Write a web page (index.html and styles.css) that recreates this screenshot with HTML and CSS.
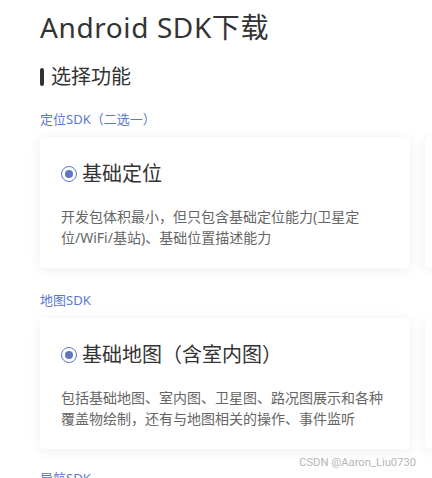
FILE: index.html
```html
<!DOCTYPE html>
<html lang="zh-CN">
<head>
<meta charset="utf-8">
<link rel="stylesheet" href="styles.css">
</head>
<body>
<div class="page">
  <h1 class="title">Android SDK下载</h1>
  <h2 class="section"><span class="bar"></span>选择功能</h2>

  <div class="group-label">定位SDK（二选一）</div>
  <div class="row">
    <div class="card">
      <div class="card-title"><span class="radio checked"></span>基础定位</div>
      <p class="card-desc">开发包体积最小，但只包含基础定位能力(卫星定位/WiFi/基站)、基础位置描述能力</p>
    </div>
    <div class="card card-peek"></div>
  </div>

  <div class="group-label">地图SDK</div>
  <div class="row">
    <div class="card">
      <div class="card-title"><span class="radio checked"></span>基础地图（含室内图）</div>
      <p class="card-desc">包括基础地图、室内图、卫星图、路况图展示和各种覆盖物绘制，还有与地图相关的操作、事件监听</p>
    </div>
    <div class="card card-peek"></div>
  </div>

  <div class="group-label group-label-last">导航SDK</div>
</div>
<div class="watermark">CSDN @Aaron_Liu0730</div>
</body>
</html>
```
FILE: styles.css
```css
html, body {
  margin: 0;
  padding: 0;
  background: #fff;
  overflow: hidden;
}
body {
  font-family: "Noto Sans", "Noto Sans CJK SC", sans-serif;
  color: #333;
  width: 432px;
  height: 478px;
  position: relative;
}
.page {
  padding: 7px 0 0 40px;
}
.title {
  margin: 0;
  font-size: 28px;
  font-weight: 400;
  line-height: 40px;
  letter-spacing: 0.6px;
  color: #333;
}
.section {
  margin: 16px 0 0;
  display: flex;
  align-items: center;
  font-size: 20px;
  font-weight: 400;
  line-height: 28px;
  color: #333;
}
.bar {
  width: 4px;
  height: 18px;
  border-radius: 2px;
  background: #333;
  margin-right: 7px;
}
.group-label {
  margin-top: 18px;
  font-size: 13px;
  line-height: 20px;
  color: #5a78cc;
}
.row + .group-label {
  margin-top: 22px;
}
.row + .group-label-last {
  margin-top: 19px;
}
.row {
  display: flex;
  gap: 15px;
  margin-top: 8px;
}
.card {
  flex: 0 0 370px;
  box-sizing: border-box;
  background: #fff;
  border-radius: 5px;
  box-shadow: 0 2px 14px rgba(0, 0, 0, 0.07);
  padding: 23px 21px 20px;
}
.card-peek {
  flex: 0 0 370px;
}
.card-title {
  display: flex;
  align-items: center;
  font-size: 20px;
  line-height: 28px;
  color: #333;
}
.radio {
  width: 16px;
  height: 16px;
  box-sizing: border-box;
  border: 1px solid #c4c4c4;
  border-radius: 50%;
  margin-right: 5px;
  position: relative;
  flex: none;
}
.radio.checked {
  border: 1.5px solid #6076c2;
}
.radio.checked::after {
  content: "";
  position: absolute;
  left: 50%;
  top: 50%;
  width: 8px;
  height: 8px;
  margin: -4px 0 0 -4px;
  border-radius: 50%;
  background: #6076c2;
}
.card-desc {
  margin: 18px 0 0;
  font-size: 14px;
  line-height: 21px;
  color: #666;
}
.watermark {
  position: absolute;
  right: 16px;
  top: 455px;
  font-family: "Roboto", "Noto Sans", sans-serif;
  font-size: 11.2px;
  line-height: 16px;
  color: #b5b5b5;
}
```
